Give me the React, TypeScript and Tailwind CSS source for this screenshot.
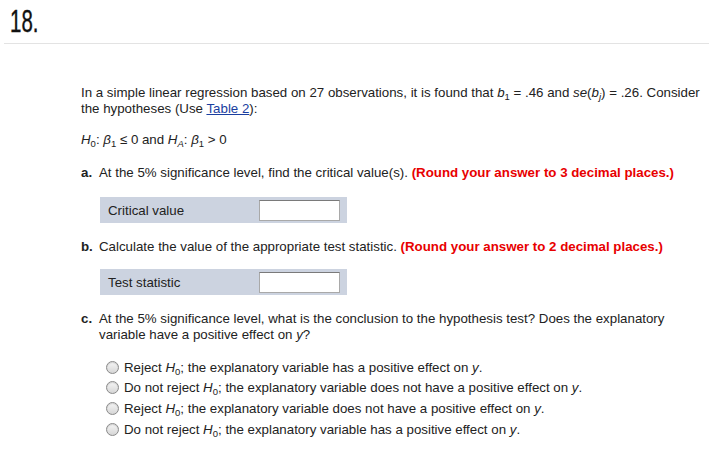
import React from "react";

const Sub = ({ children }: { children: React.ReactNode }) => (
  <span className="text-[9.5px] leading-none relative top-[3px]">{children}</span>
);

const H0 = () => (
  <span>
    <i>H</i>
    <Sub>0</Sub>
  </span>
);

const Radio = () => (
  <span className="inline-block w-[13px] h-[13px] rounded-full border border-[#8a8a8a] bg-gradient-to-b from-[#f6f6f6] to-[#d6d6d6] shadow-[inset_0_1px_1px_rgba(0,0,0,0.15)] mr-[5px] shrink-0"></span>
);

const AnswerRow = ({ label }: { label: string }) => (
  <div className="bg-[#ccd3e0] w-[247px] h-[26px] flex items-center pl-[8px] ml-[19px]">
    <span className="w-[151px]">{label}</span>
    <span className="w-[81px] h-[21px] bg-white border border-[#a9a9a9] border-t-[#7a7a7a]"></span>
  </div>
);

export default function App() {
  return (
    <div
      className="w-[709px] h-[460px] bg-white text-[#222] text-[13.3px] leading-[15px]"
      style={{ fontFamily: '"Liberation Sans", Arial, sans-serif' }}
    >
      <div className="pl-[10px] pt-[5px] h-[43px]">
        <span className="inline-block origin-left scale-x-[0.66] text-[31px] leading-[33px] text-[#111] font-medium [-webkit-text-stroke:0.4px_#111]">18.</span>
      </div>
      <div className="ml-[4px] h-px bg-[#e3e3e3]"></div>
      <div className="pl-[81px] pr-[4px] pt-[41px]">
        <p className="leading-[16px]">
          In a simple linear regression based on 27 observations, it is found that <i>b</i>
          <Sub>1</Sub> = .46 and <i>se</i>(<i>b</i>
          <Sub><i>j</i></Sub>) = .26. Consider the hypotheses (Use{" "}
          <span className="text-[#1a3ea0] underline">Table 2</span>):
        </p>
        <p className="mt-[15px]">
          <H0 />: <i>β</i>
          <Sub>1</Sub> ≤ 0 and <i>H</i>
          <Sub><i>A</i></Sub>: <i>β</i>
          <Sub>1</Sub> &gt; 0
        </p>
        <div className="mt-[18px] flex">
          <span className="w-[18px] font-bold shrink-0">a.</span>
          <span>
            At the 5% significance level, find the critical value(s).{" "}
            <b className="text-[#e80000]">(Round your answer to 3 decimal places.)</b>
          </span>
        </div>
        <div className="mt-[17px]">
          <AnswerRow label="Critical value" />
        </div>
        <div className="mt-[16px] flex">
          <span className="w-[18px] font-bold shrink-0">b.</span>
          <span>
            Calculate the value of the appropriate test statistic.{" "}
            <b className="text-[#e80000]">(Round your answer to 2 decimal places.)</b>
          </span>
        </div>
        <div className="mt-[15px]">
          <AnswerRow label="Test statistic" />
        </div>
        <div className="mt-[16px] flex">
          <span className="w-[18px] font-bold shrink-0">c.</span>
          <span className="leading-[16px] w-[580px]">
            At the 5% significance level, what is the conclusion to the hypothesis test? Does the explanatory
            variable have a positive effect on <i>y</i>?
          </span>
        </div>
        <div className="mt-[16px] ml-[25px] flex flex-col gap-[4.7px]">
          <div className="flex items-center h-[16px]">
            <Radio />
            <span>Reject <H0 />; the explanatory variable has a positive effect on <i>y</i>.</span>
          </div>
          <div className="flex items-center h-[16px]">
            <Radio />
            <span>Do not reject <H0 />; the explanatory variable does not have a positive effect on <i>y</i>.</span>
          </div>
          <div className="flex items-center h-[16px]">
            <Radio />
            <span>Reject <H0 />; the explanatory variable does not have a positive effect on <i>y</i>.</span>
          </div>
          <div className="flex items-center h-[16px]">
            <Radio />
            <span>Do not reject <H0 />; the explanatory variable has a positive effect on <i>y</i>.</span>
          </div>
        </div>
      </div>
    </div>
  );
}
